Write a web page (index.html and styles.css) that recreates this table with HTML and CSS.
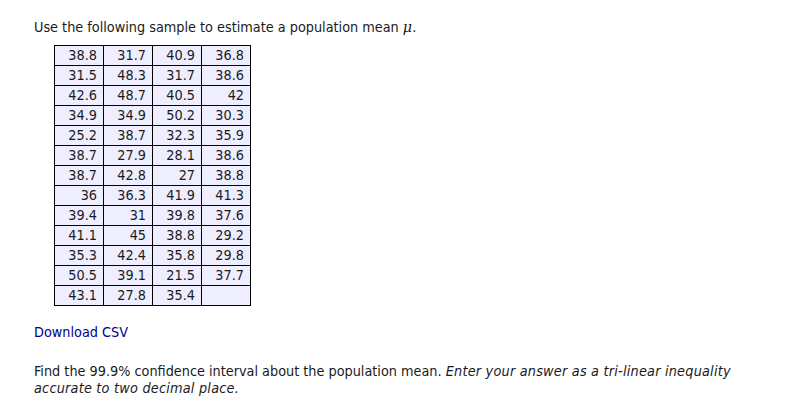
FILE: index.html
```html
<!DOCTYPE html>
<html>
<head>
<meta charset="utf-8">
<link rel="stylesheet" href="styles.css">
</head>
<body>
<div class="question">
  <p class="intro">Use the following sample to estimate a population mean <span class="mu">μ</span>.</p>
  <table class="data">
    <tr><td>38.8</td><td>31.7</td><td>40.9</td><td>36.8</td></tr>
    <tr><td>31.5</td><td>48.3</td><td>31.7</td><td>38.6</td></tr>
    <tr><td>42.6</td><td>48.7</td><td>40.5</td><td>42</td></tr>
    <tr><td>34.9</td><td>34.9</td><td>50.2</td><td>30.3</td></tr>
    <tr><td>25.2</td><td>38.7</td><td>32.3</td><td>35.9</td></tr>
    <tr><td>38.7</td><td>27.9</td><td>28.1</td><td>38.6</td></tr>
    <tr><td>38.7</td><td>42.8</td><td>27</td><td>38.8</td></tr>
    <tr><td>36</td><td>36.3</td><td>41.9</td><td>41.3</td></tr>
    <tr><td>39.4</td><td>31</td><td>39.8</td><td>37.6</td></tr>
    <tr><td>41.1</td><td>45</td><td>38.8</td><td>29.2</td></tr>
    <tr><td>35.3</td><td>42.4</td><td>35.8</td><td>29.8</td></tr>
    <tr><td>50.5</td><td>39.1</td><td>21.5</td><td>37.7</td></tr>
    <tr><td>43.1</td><td>27.8</td><td>35.4</td><td></td></tr>
  </table>
  <p class="download"><a href="#" class="link">Download CSV</a></p>
  <p class="task">Find the 99.9% confidence interval about the population mean. <em class="hint">Enter your answer as a tri-linear inequality accurate to two decimal place.</em></p>
</div>
</body>
</html>
```
FILE: styles.css
```css
html, body {
  margin: 0;
  padding: 0;
  background: #ffffff;
}
body {
  font-family: "DejaVu Sans Condensed", "DejaVu Sans", sans-serif;
  font-size: 14.3px;
  color: #1a1a1a;
}
.question {
  padding: 17px 34px 0 34px;
}
.intro {
  margin: 0;
  line-height: 20px;
}
.mu {
  font-style: italic;
  font-family: "DejaVu Serif", serif;
}
.data {
  margin: 8px 0 0 20px;
  border-collapse: collapse;
  background: #eeeeff;
  table-layout: fixed;
}
.data td {
  border: 1px solid #000000;
  width: 49px;
  height: 20px;
  padding: 0 6px 0 0;
  text-align: right;
  line-height: 19px;
  box-sizing: border-box;
}
.download {
  margin: 16px 0 0 0;
  line-height: 20px;
}
.link {
  color: #000088;
  text-decoration: none;
}
.task {
  margin: 21px 0 0 0;
  line-height: 17px;
}
.hint {
  letter-spacing: 0.22px;
}
```
